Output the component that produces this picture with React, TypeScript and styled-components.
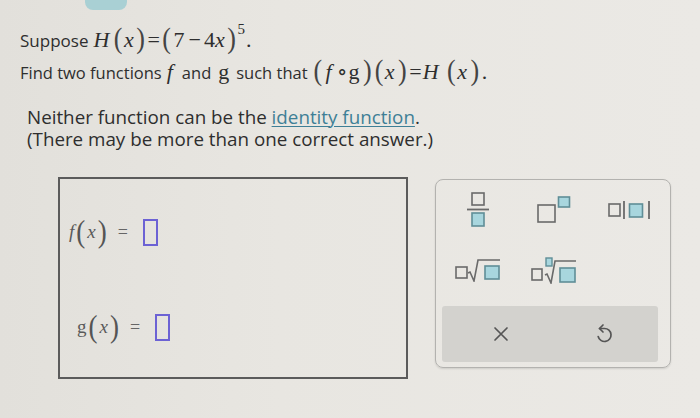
import React from "react";
import styled, { createGlobalStyle } from "styled-components";

const Global = createGlobalStyle`
  html, body { margin: 0; padding: 0; }
  body {
    background: #e7e5e0;
    font-family: "Open Sans", "Liberation Sans", sans-serif;
    color: #333;
    width: 700px;
    height: 418px;
    overflow: hidden;
  }
`;

const Page = styled.div`
  width: 700px;
  height: 418px;
  background: linear-gradient(90deg, #e2e0db 0%, #e8e6e1 40%, #ebe9e5 100%);
`;

const TopTab = styled.div`
  width: 42px;
  height: 10px;
  margin-left: 85px;
  background: #a9d0d4;
  border-radius: 0 0 8px 8px;
`;

const Question = styled.div`
  padding: 14px 0 0 20px;
  font-size: 17px;
  line-height: 30px;
  color: #2e2e2e;
`;

const Line = styled.div<{ $indent?: number; $lh?: number; $fs?: number }>`
  padding-left: ${(p) => p.$indent ?? 0}px;
  line-height: ${(p) => p.$lh ?? 30}px;
  ${(p) => (p.$fs ? `font-size: ${p.$fs}px;` : "")}
  white-space: nowrap;
`;

const Note = styled.div`
  margin-top: 18px;
  font-size: 18.8px;
`;

const Op = styled.span<{ $m?: number }>`
  font-family: "Liberation Serif", "DejaVu Serif", serif;
  font-size: 22px;
  margin: 0 ${(p) => p.$m ?? 2}px;
`;

const I = styled.span<{ $l?: number; $r?: number; $up?: boolean }>`
  font-family: "Liberation Serif", "DejaVu Serif", serif;
  font-style: ${(p) => (p.$up ? "normal" : "italic")};
  font-size: 22px;
  margin-left: ${(p) => p.$l ?? 0}px;
  margin-right: ${(p) => p.$r ?? 1}px;
`;

const Paren = styled.span`
  font-family: "Liberation Serif", serif;
  font-size: 26px;
  display: inline-block;
  transform: scaleY(1.12);
  margin: 0 1.5px;
  color: #444;
`;

const Sup = styled.sup`
  font-family: "Liberation Serif", serif;
  font-size: 15px;
  vertical-align: 13px;
  line-height: 0;
  margin-left: 0;
`;

const Link = styled.span`
  color: #3e7f96;
  text-decoration: underline;
  text-underline-offset: 2px;
  text-decoration-thickness: 1px;
`;

const Workspace = styled.div`
  display: flex;
  align-items: flex-start;
  margin-top: 27px;
  padding-left: 58px;
`;

const AnswerBox = styled.div`
  width: 350px;
  height: 202px;
  border: 2px solid #5b5b5b;
  display: flex;
  flex-direction: column;
  padding: 38px 0 0 9px;
  box-sizing: border-box;
  gap: 65px;
`;

const AnsRow = styled.div<{ $shift?: number }>`
  display: flex;
  align-items: center;
  padding-left: ${(p) => p.$shift ?? 0}px;
  font-family: "Liberation Serif", serif;
  font-size: 19px;
  color: #5a5a5a;
  height: 30px;
`;

const AnsVar = styled.span<{ $up?: boolean }>`
  font-style: ${(p) => (p.$up ? "normal" : "italic")};
`;

const AnsParen = styled.span`
  font-size: 27px;
  display: inline-block;
  transform: scaleY(1.15);
  color: #555;
  margin: 0 2px;
  font-weight: 300;
`;

const Eq = styled.span`
  margin: 0 15px 0 9px;
  font-size: 18px;
  color: #666;
`;

const Slot = styled.span`
  display: inline-block;
  width: 11px;
  height: 23px;
  border: 2px solid #6c62d4;
`;

const Keypad = styled.div`
  margin-left: 27px;
  margin-top: 2px;
  width: 236px;
  height: 189px;
  box-sizing: border-box;
  border: 1.5px solid #b3b2af;
  border-radius: 8px;
  box-shadow: 0 1px 2px rgba(0, 0, 0, 0.12);
  display: flex;
  flex-direction: column;
  padding: 0 4px 5px 4px;
`;

const KeyGrid = styled.div`
  display: grid;
  grid-template-columns: repeat(3, 76px);
  grid-template-rows: 60px 60px;
  height: 120px;
`;

const Key = styled.div`
  display: flex;
  align-items: center;
  justify-content: center;
`;

const ActionBar = styled.div`
  margin: 6px 8px 0 2px;
  height: 56px;
  background: #d3d2ce;
  border-radius: 3px;
  display: grid;
  grid-template-columns: 1fr 1fr;
`;

const Action = styled.div<{ $dx?: number }>`
  display: flex;
  align-items: center;
  justify-content: center;
  padding-left: ${(p) => p.$dx ?? 0}px;
`;

const GREY = "#6a6a6a";
const TEAL_FILL = "#a8d6de";
const TEAL_LINE = "#5f8e97";

const FracIcon = () => (
  <svg width="24" height="36" viewBox="0 0 24 36">
    <rect x="6" y="1" width="12" height="12" fill="none" stroke={GREY} strokeWidth="1.6" />
    <line x1="1" y1="17.5" x2="23" y2="17.5" stroke={GREY} strokeWidth="1.8" />
    <rect x="6" y="21" width="12" height="13" fill={TEAL_FILL} stroke={TEAL_LINE} strokeWidth="1.6" />
  </svg>
);

const PowIcon = () => (
  <svg width="34" height="28" viewBox="0 0 34 28">
    <rect x="1" y="9" width="17" height="17" fill="none" stroke={GREY} strokeWidth="1.6" />
    <rect x="21.5" y="1" width="11" height="10" fill={TEAL_FILL} stroke={TEAL_LINE} strokeWidth="1.6" />
  </svg>
);

const AbsIcon = () => (
  <svg width="44" height="20" viewBox="0 0 44 20">
    <rect x="1" y="4" width="11" height="12" fill="none" stroke={GREY} strokeWidth="1.6" />
    <line x1="16" y1="1" x2="16" y2="19" stroke={GREY} strokeWidth="1.8" />
    <rect x="21.5" y="4" width="13" height="13" fill={TEAL_FILL} stroke={TEAL_LINE} strokeWidth="1.6" />
    <line x1="41" y1="1" x2="41" y2="19" stroke={GREY} strokeWidth="1.8" />
  </svg>
);

const SqrtIcon = () => (
  <svg width="46" height="24" viewBox="0 0 46 24">
    <rect x="1" y="9" width="11" height="11" fill="none" stroke={GREY} strokeWidth="1.6" />
    <polyline points="13,15 15,14 19,23 23,2 45,2" fill="none" stroke={GREY} strokeWidth="1.6" />
    <rect x="30" y="8" width="14" height="13" fill={TEAL_FILL} stroke={TEAL_LINE} strokeWidth="1.6" />
  </svg>
);

const RootIcon = () => (
  <svg width="46" height="28" viewBox="0 0 46 28">
    <rect x="1" y="13" width="10" height="11" fill="none" stroke={GREY} strokeWidth="1.6" />
    <rect x="15" y="2" width="6" height="8" fill={TEAL_FILL} stroke={TEAL_LINE} strokeWidth="1.4" />
    <polyline points="14,19 16,18 20,27 24,5 45,5" fill="none" stroke={GREY} strokeWidth="1.6" />
    <rect x="29" y="12" width="15" height="14" fill={TEAL_FILL} stroke={TEAL_LINE} strokeWidth="1.6" />
  </svg>
);

const XIcon = () => (
  <svg width="16" height="16" viewBox="0 0 16 16">
    <path d="M2 2 L14 14 M14 2 L2 14" stroke="#555" strokeWidth="1.7" strokeLinecap="round" />
  </svg>
);

const UndoIcon = () => (
  <svg width="18" height="22" viewBox="0 0 18 22">
    <path d="M8 2 L4.5 5.5 L8 9" fill="none" stroke="#555" strokeWidth="1.7" strokeLinecap="round" strokeLinejoin="round" />
    <path d="M4.5 5.5 H9.5 A6.5 6.5 0 1 1 3.2 13.5" fill="none" stroke="#555" strokeWidth="1.7" strokeLinecap="round" />
  </svg>
);

export default function App() {
  return (
    <>
      <Global />
      <Page>
        <TopTab />
        <Question>
          <Line>
            Suppose<I $l={5} $r={3}>H</I>
            <Paren>(</Paren>
            <I>x</I>
            <Paren>)</Paren>
            <Op $m={1}>=</Op>
            <Paren>(</Paren>
            <Op $m={1}>7</Op>
            <Op $m={3}>−</Op>
            <Op $m={0}>4</Op>
            <I>x</I>
            <Paren>)</Paren>
            <Sup>5</Sup>
            <Op $m={1}>.</Op>
          </Line>
          <Line $fs={16.5}>
            Find two functions<I $l={5} $r={9}>f</I>and<I $l={7} $r={7} $up>g</I>such that <Paren>(</Paren>
            <I $l={2} $r={4}>f</I>
            <Op $m={1}>∘</Op>
            <I $r={2} $up>g</I>
            <Paren>)</Paren>
            <Paren>(</Paren>
            <I $r={2}>x</I>
            <Paren>)</Paren>
            <Op $m={1}>=</Op>
            <I $r={7}>H</I>
            <Paren>(</Paren>
            <I $r={2}>x</I>
            <Paren>)</Paren>
            <Op $m={1}>.</Op>
          </Line>
          <Note>
            <Line $indent={7} $lh={22}>
              Neither function can be the <Link>identity function</Link>.
            </Line>
            <Line $indent={7} $lh={22}>
              (There may be more than one correct answer.)
            </Line>
          </Note>
        </Question>
        <Workspace>
          <AnswerBox>
            <AnsRow>
              <AnsVar>f</AnsVar>
              <AnsParen>(</AnsParen>
              <AnsVar>x</AnsVar>
              <AnsParen>)</AnsParen>
              <Eq>=</Eq>
              <Slot />
            </AnsRow>
            <AnsRow $shift={8}>
              <AnsVar $up>g</AnsVar>
              <AnsParen>(</AnsParen>
              <AnsVar>x</AnsVar>
              <AnsParen>)</AnsParen>
              <Eq>=</Eq>
              <Slot />
            </AnsRow>
          </AnswerBox>
          <Keypad>
            <KeyGrid>
              <Key><FracIcon /></Key>
              <Key><PowIcon /></Key>
              <Key><AbsIcon /></Key>
              <Key><SqrtIcon /></Key>
              <Key><RootIcon /></Key>
              <Key />
            </KeyGrid>
            <ActionBar>
              <Action $dx={10}><XIcon /></Action>
              <Action><UndoIcon /></Action>
            </ActionBar>
          </Keypad>
        </Workspace>
      </Page>
    </>
  );
}
